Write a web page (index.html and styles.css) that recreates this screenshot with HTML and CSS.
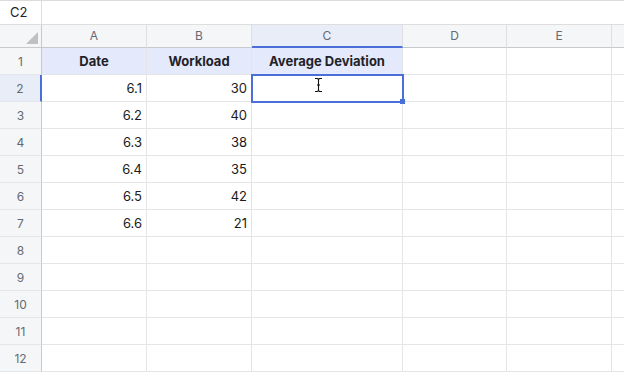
FILE: index.html
```html
<!DOCTYPE html>
<html lang="en">
<head>
  <meta charset="UTF-8" />
  <meta name="viewport" content="width=device-width, initial-scale=1.0" />
  <title>Sheet</title>
  <link rel="stylesheet" href="styles.css">
</head>
<body>
  <div class="formula-bar">
    <div class="name-box">C2</div>
    <div class="formula-input"></div>
  </div>

  <div class="sheet">
    <div class="corner"><span class="corner-mark"></span></div>
    <div class="col-head">A</div>
    <div class="col-head">B</div>
    <div class="col-head active">C</div>
    <div class="col-head">D</div>
    <div class="col-head">E</div>
    <div class="col-head last"></div>

    <div class="row-head">1</div>
    <div class="cell title">Date</div>
    <div class="cell title">Workload</div>
    <div class="cell title">Average Deviation</div>
    <div class="cell"></div><div class="cell"></div><div class="cell last"></div>

    <div class="row-head active">2</div>
    <div class="cell num">6.1</div>
    <div class="cell num">30</div>
    <div class="cell selected">
      <svg class="ibeam" width="9" height="16" viewBox="0 0 9 16">
        <path d="M1 1.5h2.5l1 1 1-1H8M1 14.5h2.5l1-1 1 1H8M4.5 2.5v11M3 8h3" fill="none" stroke="#fff" stroke-width="2.6" />
        <path d="M1 1.5h2.5l1 1 1-1H8M1 14.5h2.5l1-1 1 1H8M4.5 2.5v11M3 8h3" fill="none" stroke="#111" stroke-width="1.1" />
      </svg>
    </div>
    <div class="cell"></div><div class="cell"></div><div class="cell last"></div>

    <div class="row-head">3</div>
    <div class="cell num">6.2</div>
    <div class="cell num">40</div>
    <div class="cell"></div><div class="cell"></div><div class="cell"></div><div class="cell last"></div>

    <div class="row-head">4</div>
    <div class="cell num">6.3</div>
    <div class="cell num">38</div>
    <div class="cell"></div><div class="cell"></div><div class="cell"></div><div class="cell last"></div>

    <div class="row-head">5</div>
    <div class="cell num">6.4</div>
    <div class="cell num">35</div>
    <div class="cell"></div><div class="cell"></div><div class="cell"></div><div class="cell last"></div>

    <div class="row-head">6</div>
    <div class="cell num">6.5</div>
    <div class="cell num">42</div>
    <div class="cell"></div><div class="cell"></div><div class="cell"></div><div class="cell last"></div>

    <div class="row-head">7</div>
    <div class="cell num">6.6</div>
    <div class="cell num">21</div>
    <div class="cell"></div><div class="cell"></div><div class="cell"></div><div class="cell last"></div>

    <div class="row-head">8</div>
    <div class="cell"></div><div class="cell"></div><div class="cell"></div><div class="cell"></div><div class="cell"></div><div class="cell last"></div>

    <div class="row-head">9</div>
    <div class="cell"></div><div class="cell"></div><div class="cell"></div><div class="cell"></div><div class="cell"></div><div class="cell last"></div>

    <div class="row-head">10</div>
    <div class="cell"></div><div class="cell"></div><div class="cell"></div><div class="cell"></div><div class="cell"></div><div class="cell last"></div>

    <div class="row-head">11</div>
    <div class="cell"></div><div class="cell"></div><div class="cell"></div><div class="cell"></div><div class="cell"></div><div class="cell last"></div>

    <div class="row-head">12</div>
    <div class="cell"></div><div class="cell"></div><div class="cell"></div><div class="cell"></div><div class="cell"></div><div class="cell last"></div>
  </div>
</body>
</html>
```

FILE: styles.css
```css
body {
  margin: 0;
  font-family: Inter, "Noto Sans", sans-serif;
  background-color: #fff;
  color: #1f2329;
  overflow: hidden;
}

.formula-bar {
  display: flex;
  height: 25px;
  box-sizing: border-box;
  border-top: 1px solid #dcdcdc;
  border-bottom: 1px solid #dedede;
}

.name-box {
  width: 42px;
  box-sizing: border-box;
  border-right: 1px solid #dedede;
  padding-left: 10px;
  font-size: 13px;
  line-height: 23px;
  color: #1f2329;
}

.formula-input {
  flex: 1;
}

.sheet {
  display: grid;
  grid-template-columns: 42px 105px 105px 151px 104px 105px 1fr;
  grid-template-rows: 23px repeat(12, 27px);
}

.sheet > div {
  box-sizing: border-box;
}

.corner {
  background-color: #f5f6f7;
  border-right: 1px solid #c8c9cc;
  border-bottom: 1px solid #c8c9cc;
  position: relative;
}

.corner-mark {
  position: absolute;
  right: 3px;
  bottom: 3px;
  width: 0;
  height: 0;
  border-left: 12px solid transparent;
  border-bottom: 12px solid #bfc0c2;
}

.col-head {
  background-color: #f5f6f7;
  border-right: 1px solid #dedfe1;
  border-bottom: 1px solid #c8c9cc;
  text-align: center;
  font-size: 12px;
  line-height: 22px;
  color: #646a73;
}

.col-head.active {
  background-color: #e9edf7;
  border-bottom: 2px solid #4a6fd8;
}

.col-head.last,
.cell.last {
  border-right: none;
}

.row-head {
  background-color: #f5f6f7;
  border-right: 1px solid #c8c9cc;
  border-bottom: 1px solid #e4e5e7;
  text-align: center;
  font-size: 12px;
  line-height: 27px;
  color: #646a73;
}

.row-head.active {
  background-color: #e9edf7;
  border-right: 2px solid #4a6fd8;
}

.cell {
  border-right: 1px solid #e4e5e7;
  border-bottom: 1px solid #e4e5e7;
  font-size: 13px;
  line-height: 27px;
  padding: 0 4px;
  white-space: nowrap;
  overflow: hidden;
  color: #1a1c20;
}

.cell.title {
  background-color: #e4e9fb;
  font-weight: 700;
  text-align: center;
  color: #1f2329;
}

.cell.num {
  text-align: right;
}

.cell.selected {
  position: relative;
  overflow: visible;
}

.cell.selected::after {
  content: "";
  position: absolute;
  left: -1px;
  top: -1px;
  right: -2px;
  bottom: -2px;
  border: 2px solid #4a6fd8;
}

.cell.selected::before {
  content: "";
  position: absolute;
  right: -3px;
  bottom: -3px;
  width: 5px;
  height: 5px;
  background-color: #4a6fd8;
  z-index: 1;
}

.ibeam {
  position: absolute;
  left: 62px;
  top: 2px;
}
```
